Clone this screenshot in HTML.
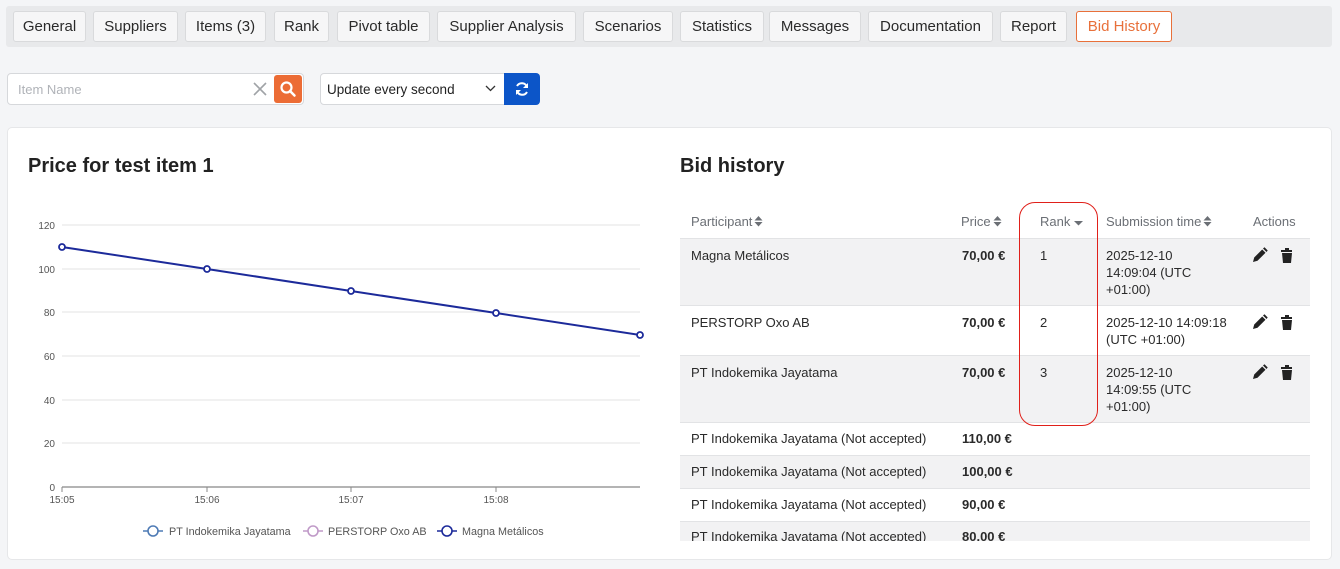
<!DOCTYPE html>
<html><head><meta charset="utf-8"><style>
*{box-sizing:border-box;margin:0;padding:0}
body{width:1340px;height:569px;background:#f4f5f7;font-family:"Liberation Sans",Arial,sans-serif;color:#222;position:relative;overflow:hidden}
.a{position:absolute}
.bar{left:6px;top:6px;width:1326px;height:41px;background:#e8e9eb;border-radius:3px}
.tab{position:absolute;top:11px;height:31px;background:#f6f6f7;border:1px solid #d9dadc;border-radius:3px;font-size:15px;line-height:30px;text-align:center;color:#2a2a2a}
.tab.on{background:#fff;border-color:#e8703a;color:#e8703a}
.card{left:7px;top:127px;width:1325px;height:433px;background:#fff;border:1px solid #e6e7e9;border-radius:5px}
h2{position:absolute;font-size:20px;font-weight:bold;color:#222}
.th{position:absolute;top:214px;font-size:13px;color:#6b6f75}
.th svg{vertical-align:-1px;margin-left:2px}
.row{position:absolute;left:680px;width:630px;border-top:1px solid #e2e3e5}
.g{background:#f2f2f3}
.t{position:absolute;font-size:13px;color:#2a2a2a;line-height:17px}
.b{font-weight:bold}
</style></head><body>
<div class="a bar"></div>
<div class="tab" style="left:13px;width:73px">General</div>
<div class="tab" style="left:93px;width:85px">Suppliers</div>
<div class="tab" style="left:185px;width:81px">Items (3)</div>
<div class="tab" style="left:274px;width:55px">Rank</div>
<div class="tab" style="left:337px;width:93px">Pivot table</div>
<div class="tab" style="left:437px;width:139px">Supplier Analysis</div>
<div class="tab" style="left:583px;width:90px">Scenarios</div>
<div class="tab" style="left:680px;width:84px">Statistics</div>
<div class="tab" style="left:769px;width:92px">Messages</div>
<div class="tab" style="left:868px;width:125px">Documentation</div>
<div class="tab" style="left:1000px;width:67px">Report</div>
<div class="tab on" style="left:1076px;width:96px">Bid History</div>

<div class="a" style="left:7px;top:73px;width:297px;height:32px;background:#fff;border:1px solid #d6d8db;border-radius:4px"></div>
<div class="a" style="left:18px;top:82px;font-size:13px;color:#b0b3b8">Item Name</div>
<svg class="a" style="left:253px;top:82px" width="14" height="14"><path d="M1 1l12 12M13 1L1 13" stroke="#a0a3a7" stroke-width="1.6"/></svg>
<div class="a" style="left:274px;top:75px;width:28px;height:28px;background:#ec6c35;border-radius:3px"></div>
<svg class="a" style="left:279px;top:80px" width="18" height="18" viewBox="0 0 18 18"><circle cx="7.5" cy="7.5" r="5" fill="none" stroke="#fff" stroke-width="2.2"/><path d="M11 11l4.5 4.5" stroke="#fff" stroke-width="2.5" stroke-linecap="round"/></svg>
<div class="a" style="left:320px;top:73px;width:186px;height:32px;background:#fff;border:1px solid #d6d8db;border-radius:4px 0 0 4px"></div>
<div class="a" style="left:327px;top:82px;font-size:13.5px;color:#222">Update every second</div>
<svg class="a" style="left:485px;top:85px" width="11" height="7"><path d="M1 1l4.5 4.5L10 1" fill="none" stroke="#333" stroke-width="1.3"/></svg>
<div class="a" style="left:504px;top:73px;width:36px;height:32px;background:#0c55c8;border-radius:0 4px 4px 0"></div>
<svg class="a" style="left:514px;top:81px" width="16" height="16" viewBox="0 0 16 16"><path d="M13 6A5.5 5.5 0 0 0 3 5" fill="none" stroke="#fff" stroke-width="2"/><path d="M14 2v5h-5z" fill="#fff"/><path d="M3 10a5.5 5.5 0 0 0 10 1" fill="none" stroke="#fff" stroke-width="2"/><path d="M2 14V9h5z" fill="#fff"/></svg>

<div class="a card"></div>
<h2 style="left:28px;top:155px">Price for test item 1</h2>
<svg class="a" style="left:0;top:200px" width="670" height="350" font-family="Liberation Sans,Arial,sans-serif" font-size="10" fill="#555">
<g stroke="#e3e3e3" stroke-width="1">
<line x1="62" x2="640" y1="25" y2="25"/><line x1="62" x2="640" y1="69" y2="69"/><line x1="62" x2="640" y1="112" y2="112"/><line x1="62" x2="640" y1="156" y2="156"/><line x1="62" x2="640" y1="200" y2="200"/><line x1="62" x2="640" y1="243" y2="243"/></g>
<line x1="62" x2="640" y1="287" y2="287" stroke="#888" stroke-width="1.2"/>
<g stroke="#888"><line x1="62" x2="62" y1="287" y2="292"/><line x1="207" x2="207" y1="287" y2="292"/><line x1="351" x2="351" y1="287" y2="292"/><line x1="496" x2="496" y1="287" y2="292"/></g>
<g text-anchor="end"><text x="55" y="29">120</text><text x="55" y="73">100</text><text x="55" y="116">80</text><text x="55" y="160">60</text><text x="55" y="204">40</text><text x="55" y="247">20</text><text x="55" y="291">0</text></g>
<g text-anchor="middle"><text x="62" y="303">15:05</text><text x="207" y="303">15:06</text><text x="351" y="303">15:07</text><text x="496" y="303">15:08</text></g>
<polyline points="62,47 207,69 351,91 496,113 640,135" fill="none" stroke="#1c2a9a" stroke-width="2"/>
<g fill="#fff" stroke="#1c2a9a" stroke-width="1.8"><circle cx="62" cy="47" r="3"/><circle cx="207" cy="69" r="3"/><circle cx="351" cy="91" r="3"/><circle cx="496" cy="113" r="3"/><circle cx="640" cy="135" r="3"/></g>
<g stroke-width="1.6" fill="#fff">
<line x1="143" x2="163" y1="331" y2="331" stroke="#4f7bb5"/><circle cx="153" cy="331" r="5" stroke="#4f7bb5"/>
<line x1="303" x2="323" y1="331" y2="331" stroke="#c09ac8"/><circle cx="313" cy="331" r="5" stroke="#c09ac8"/>
<line x1="437" x2="457" y1="331" y2="331" stroke="#1c2a9a"/><circle cx="447" cy="331" r="5" stroke="#1c2a9a"/></g>
<g font-size="10.8"><text x="169" y="335">PT Indokemika Jayatama</text><text x="328" y="335">PERSTORP Oxo AB</text><text x="462" y="335">Magna Metálicos</text></g>
</svg>

<h2 style="left:680px;top:155px">Bid history</h2>
<div class="th" style="left:691px">Participant<svg width="9" height="12"><path d="M0.5 5.5L4.5 1l4 4.5zM0.5 7l4 4.5 4-4.5z" fill="#6b6f75"/></svg></div>
<div class="th" style="left:961px">Price<svg width="9" height="12"><path d="M0.5 5.5L4.5 1l4 4.5zM0.5 7l4 4.5 4-4.5z" fill="#6b6f75"/></svg></div>
<div class="th" style="left:1040px">Rank<svg width="12" height="12"><path d="M2 6l4.5 4.5L11 6z" fill="#6b6f75"/></svg></div>
<div class="th" style="left:1106px">Submission time<svg width="9" height="12"><path d="M0.5 5.5L4.5 1l4 4.5zM0.5 7l4 4.5 4-4.5z" fill="#6b6f75"/></svg></div>
<div class="th" style="left:1253px">Actions</div>

<div class="row g" style="top:238px;height:67px"></div>
<div class="row" style="top:305px;height:50px"></div>
<div class="row g" style="top:355px;height:67px"></div>
<div class="row" style="top:422px;height:33px"></div>
<div class="row g" style="top:455px;height:33px"></div>
<div class="row" style="top:488px;height:33px"></div>
<div class="row g" style="top:521px;height:20px"></div>

<div class="t" style="left:691px;top:247px">Magna Metálicos</div>
<div class="t b" style="left:962px;top:247px">70,00 €</div>
<div class="t" style="left:1040px;top:247px">1</div>
<div class="t" style="left:1106px;top:247px">2025-12-10<br>14:09:04 (UTC<br>+01:00)</div>
<div class="t" style="left:691px;top:314px">PERSTORP Oxo AB</div>
<div class="t b" style="left:962px;top:314px">70,00 €</div>
<div class="t" style="left:1040px;top:314px">2</div>
<div class="t" style="left:1106px;top:314px">2025-12-10 14:09:18<br>(UTC +01:00)</div>
<div class="t" style="left:691px;top:364px">PT Indokemika Jayatama</div>
<div class="t b" style="left:962px;top:364px">70,00 €</div>
<div class="t" style="left:1040px;top:364px">3</div>
<div class="t" style="left:1106px;top:364px">2025-12-10<br>14:09:55 (UTC<br>+01:00)</div>
<div class="t" style="left:691px;top:430px">PT Indokemika Jayatama (Not accepted)</div><div class="t b" style="left:962px;top:430px">110,00 €</div>
<div class="t" style="left:691px;top:463px">PT Indokemika Jayatama (Not accepted)</div><div class="t b" style="left:962px;top:463px">100,00 €</div>
<div class="t" style="left:691px;top:496px">PT Indokemika Jayatama (Not accepted)</div><div class="t b" style="left:962px;top:496px">90,00 €</div>
<div class="a" style="left:680px;top:521px;width:630px;height:20px;overflow:hidden"><div class="t" style="left:11px;top:7px">PT Indokemika Jayatama (Not accepted)</div><div class="t b" style="left:282px;top:7px">80,00 €</div></div>

<svg class="a" style="left:1252px;top:247px" width="40" height="140">
<defs><g id="ic"><path d="M1 15l1.2-4.5 8-8 3.3 3.3-8 8z" fill="#222"/><path d="M11 1.5l1.5-1.2 3.2 3.2-1.2 1.5z" fill="#222"/><g transform="translate(30,1)" fill="#222"><rect x="-1" y="2" width="12" height="2"/><rect x="3" y="0" width="4" height="2"/><path d="M0 5h10l-1 10H1z"/></g></g></defs>
<use href="#ic"/><use href="#ic" y="67"/><use href="#ic" y="117"/>
</svg>
<div class="a" style="left:1019px;top:202px;width:79px;height:224px;border:1.5px solid #e0201a;border-radius:16px"></div>
</body></html>
